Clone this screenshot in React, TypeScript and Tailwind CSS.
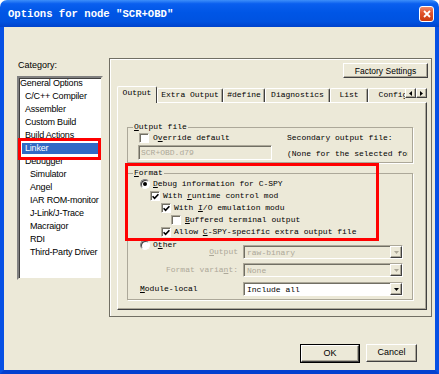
import React from 'react'

const mono = "font-['Liberation_Mono',monospace]"
const sans = "font-['Liberation_Sans',Arial,sans-serif]"

const raised =
  'border border-t-white border-l-white border-b-[#404040] border-r-[#404040] shadow-[inset_-1px_-1px_0_#aca899]'
const sunken =
  'border border-t-[#aca899] border-l-[#aca899] border-b-white border-r-white shadow-[inset_1px_1px_0_#716f64]'

const categories: [string, number][] = [
  ['General Options', 0],
  ['C/C++ Compiler', 1],
  ['Assembler', 1],
  ['Custom Build', 1],
  ['Build Actions', 1],
  ['Linker', 1],
  ['Debugger', 1],
  ['Simulator', 2],
  ['Angel', 2],
  ['IAR ROM-monitor', 2],
  ['J-Link/J-Trace', 2],
  ['Macraigor', 2],
  ['RDI', 2],
  ['Third-Party Driver', 2],
]

const indent = ['pl-[1px]', 'pl-[6px]', 'pl-[11px]']

const tabs = [
  { label: 'Output', w: 'w-[40px]' },
  { label: 'Extra Output', w: 'w-[66px]' },
  { label: '#define', w: 'w-[42px]' },
  { label: 'Diagnostics', w: 'w-[65px]' },
  { label: 'List', w: 'w-[38px]' },
  { label: 'Config', w: 'w-[50px]' },
]

function CheckBox({ checked = false }: { checked?: boolean }) {
  return (
    <span className={`w-[10px] h-[10px] shrink-0 bg-white flex items-center justify-center ${sunken}`}>
      {checked && (
        <svg width="7" height="7" viewBox="0 0 7 7">
          <path d="M0.6 3.2 L2.6 5.3 L6.4 1.2" stroke="#000" strokeWidth="1.6" fill="none" />
        </svg>
      )}
    </span>
  )
}

function Radio({ on = false }: { on?: boolean }) {
  return (
    <span className="w-[10px] h-[10px] shrink-0 rounded-full bg-white border border-t-[#808080] border-l-[#808080] border-b-white border-r-white shadow-[inset_1px_1px_0_#404040] flex items-center justify-center">
      {on && <span className="w-[4px] h-[4px] rounded-full bg-black" />}
    </span>
  )
}

function Combo({ value, disabled = false }: { value: string; disabled?: boolean }) {
  return (
    <div className={`w-[160px] h-[14px] flex ${sunken} ${disabled ? 'bg-[#ece9d8]' : 'bg-white'}`}>
      <span
        className={`flex-1 pl-[3px] pt-[1px] leading-[11px] text-[8px] ${mono} ${
          disabled ? 'text-[#aca899]' : 'text-black'
        }`}
      >
        {value}
      </span>
      <span className={`w-[12px] h-[12px] bg-[#ece9d8] flex items-center justify-center ${raised}`}>
        <svg width="5" height="3" viewBox="0 0 5 3">
          <path d="M0 0H5L2.5 3Z" fill={disabled ? '#aca899' : '#000'} />
        </svg>
      </span>
    </div>
  )
}

export default function App() {
  return (
    <div className="w-[439px] h-[374px] bg-white flex flex-col relative overflow-hidden">
      {/* title bar */}
      <div className="h-[27px] shrink-0 rounded-t-[7px] bg-[linear-gradient(180deg,#3d8ffa_0%,#0a5fef_14%,#0056e6_45%,#0052e0_80%,#0043cc_100%)] flex items-center pl-[8px] pr-[5px]">
        <span className={`text-white font-bold text-[10.6px] leading-[12px] ${mono}`}>
          Options for node "SCR+OBD"
        </span>
        <div className="ml-auto mt-[1px] w-[15px] h-[16px] rounded-[3px] border border-white bg-[linear-gradient(180deg,#f08a6a_0%,#e2552f_40%,#c9390f_100%)] flex items-center justify-center">
          <svg width="8" height="8" viewBox="0 0 8 8">
            <path d="M1 1L7 7M7 1L1 7" stroke="#fff" strokeWidth="1.8" />
          </svg>
        </div>
      </div>

      {/* dialog body */}
      <div className="flex-1 bg-[#ece9d8] border-x-4 border-b-4 border-x-[#0650e4] border-b-[#0340cf] flex flex-col">
        <div className="flex items-start">
          {/* category column */}
          <div className={`ml-[13px] w-[86px] pt-[32px] ${sans}`}>
            <div className="pl-[1px] h-[12px] leading-[12px] text-[9px] text-black">Category:</div>
            <div className="mt-[5px] h-[204px] bg-white border-2 border-t-[#808080] border-l-[#808080] border-b-[#ece9d8] border-r-[#ece9d8] shadow-[inset_1px_1px_0_#404040]">
              <div className="-mt-[1px] text-[9px] tracking-[-0.2px] text-black">
                {categories.map(([name, level]) =>
                  name === 'Linker' ? (
                    <div key={name} className="h-[13px] pl-[3px] flex items-center">
                      <span className="w-[76px] h-[11px] leading-[11px] pl-[3px] bg-[#316ac5] text-white">
                        {name}
                      </span>
                    </div>
                  ) : (
                    <div key={name} className={`h-[13px] leading-[13px] whitespace-nowrap ${indent[level]}`}>
                      {name}
                    </div>
                  ),
                )}
              </div>
            </div>
          </div>

          {/* right frame */}
          <div className="ml-[6px] mt-[31px] w-[323px] h-[259px] border border-[#716f64] shadow-[inset_1px_1px_0_#fff] flex flex-col">
            <button
              className={`self-end mr-[3px] mt-[4px] w-[85px] h-[15px] bg-[#ece9d8] text-[8.5px] leading-[12px] text-black ${sans} ${raised}`}
            >
              Factory Settings
            </button>

            {/* tab strip */}
            <div className="ml-[7px] mt-[8px] h-[17px] w-[310px] flex items-start relative z-10">
              <div className="w-[288px] h-[17px] flex items-end overflow-hidden">
                {tabs.map((t, i) =>
                  i === 0 ? (
                    <div
                      key={t.label}
                      className={`${t.w} h-[17px] shrink-0 bg-[#ece9d8] border-t border-l border-t-white border-l-white border-r border-r-[#404040] rounded-t-[2px] pt-[1px] text-center leading-[10px] text-[8px] text-black ${mono}`}
                    >
                      {t.label}
                    </div>
                  ) : (
                    <div
                      key={t.label}
                      className={`${t.w} h-[14px] mb-[1px] shrink-0 border-t border-l border-t-white border-l-white border-r border-r-[#404040] shadow-[inset_-1px_0_0_#aca899] rounded-t-[2px] text-center leading-[11px] text-[8px] text-black whitespace-nowrap ${mono}`}
                    >
                      {t.label}
                    </div>
                  ),
                )}
              </div>
              <div className="mt-[2px] flex">
                <span className={`w-[11px] h-[10px] bg-[#ece9d8] flex items-center justify-center ${raised}`}>
                  <svg width="3" height="5" viewBox="0 0 3 5">
                    <path d="M3 0V5L0 2.5Z" fill="#000" />
                  </svg>
                </span>
                <span className={`w-[11px] h-[10px] bg-[#ece9d8] flex items-center justify-center ${raised}`}>
                  <svg width="3" height="5" viewBox="0 0 3 5">
                    <path d="M0 0V5L3 2.5Z" fill="#000" />
                  </svg>
                </span>
              </div>
            </div>

            {/* tab page */}
            <div
              className={`ml-[7px] -mt-[1px] w-[310px] h-[208px] border border-t-white border-l-white border-b-[#404040] border-r-[#404040] shadow-[inset_-1px_-1px_0_#aca899] pl-[9px] text-[8px] text-black ${mono}`}
            >
              {/* output file group */}
              <div className="mt-[24px] w-[286px] h-[36px] border border-[#aca899] shadow-[1px_1px_0_#fff]">
                <div className="-mt-[6px] ml-[5px] w-fit px-[1px] bg-[#ece9d8] leading-[10px]">
                  <u>O</u>utput file
                </div>
                <div className="mt-[1px] flex">
                  <div className="pl-[11px] w-[159px]">
                    <div className="h-[10px] flex items-center gap-[4px]">
                      <CheckBox />
                      <span className="leading-[10px]">
                        O<u>v</u>erride default
                      </span>
                    </div>
                    <div
                      className={`mt-[2px] -ml-[1px] w-[134px] h-[15px] bg-[#ece9d8] pl-[2px] leading-[13px] text-[#aca899] ${sunken}`}
                    >
                      SCR+OBD.d79
                    </div>
                  </div>
                  <div className="w-[121px] overflow-hidden whitespace-nowrap">
                    <div className="leading-[10px]">Secondary output file:</div>
                    <div className="mt-[6px] leading-[10px]">(None for the selected format)</div>
                  </div>
                </div>
              </div>

              {/* format group */}
              <div className="mt-[10px] w-[286px] h-[127px] border border-[#aca899] shadow-[1px_1px_0_#fff]">
                <div className="-mt-[6px] ml-[5px] w-fit px-[1px] bg-[#ece9d8] leading-[10px]">
                  <u>F</u>ormat
                </div>
                <div className="pl-[12px]">
                  <div className="h-[12px] flex items-center gap-[3px]">
                    <Radio on />
                    <span>
                      <u>D</u>ebug information for C-SPY
                    </span>
                  </div>
                  <div className="h-[12px] pl-[10px] flex items-center gap-[3px]">
                    <CheckBox checked />
                    <span>
                      With <u>r</u>untime control mod
                    </span>
                  </div>
                  <div className="h-[12px] pl-[21px] flex items-center gap-[3px]">
                    <CheckBox checked />
                    <span>
                      With <u>I</u>/O emulation modu
                    </span>
                  </div>
                  <div className="h-[12px] pl-[31px] flex items-center gap-[4px]">
                    <CheckBox />
                    <span>
                      <u>B</u>uffered terminal output
                    </span>
                  </div>
                  <div className="h-[12px] pl-[21px] flex items-center gap-[3px]">
                    <CheckBox checked />
                    <span>
                      Allow <u>C</u>-SPY-specific extra output file
                    </span>
                  </div>
                  <div className="mt-[1px] h-[12px] flex items-center gap-[3px]">
                    <Radio />
                    <span>
                      O<u>t</u>her
                    </span>
                  </div>
                  <div className="-mt-[6px] flex items-center">
                    <span className="w-[98px] text-right text-[#aca899]">
                      <u>O</u>utput
                    </span>
                    <span className="ml-[5px]">
                      <Combo value="raw-binary" disabled />
                    </span>
                  </div>
                  <div className="mt-[4px] flex items-center">
                    <span className="w-[98px] text-right text-[#aca899]">
                      Format varia<u>n</u>t:
                    </span>
                    <span className="ml-[5px]">
                      <Combo value="None" disabled />
                    </span>
                  </div>
                  <div className="mt-[5px] flex items-center">
                    <span className="w-[98px]">
                      <u>M</u>odule-local
                    </span>
                    <span className="ml-[5px]">
                      <Combo value="Include all" />
                    </span>
                  </div>
                </div>
              </div>
            </div>
          </div>
        </div>

        {/* OK / Cancel */}
        <div className={`mt-[27px] flex items-start text-[9px] text-black ${sans}`}>
          <button className="ml-[296px] w-[60px] h-[19px] border border-black bg-[#ece9d8] p-0">
            <span className={`w-full h-full flex items-center justify-center ${raised}`}>OK</span>
          </button>
          <button className={`ml-[6px] w-[51px] h-[18px] bg-[#ece9d8] ${raised}`}>Cancel</button>
        </div>
      </div>

      {/* red annotation boxes */}
      <div className="absolute left-[18px] top-[138px] w-[83px] h-[22px] border-[3px] border-[#ff0000]" />
      <div className="absolute left-[125px] top-[163px] w-[254px] h-[78px] border-[3px] border-[#ff0000]" />
    </div>
  )
}
